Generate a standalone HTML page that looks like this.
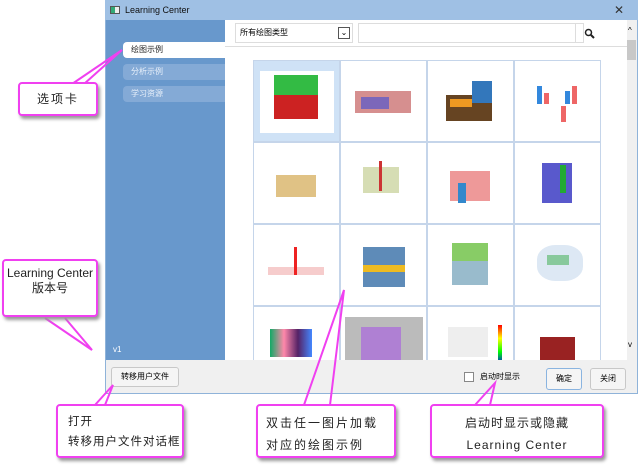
<!DOCTYPE html>
<html><head><meta charset="utf-8"><style>
*{margin:0;padding:0;box-sizing:border-box}
body{width:638px;height:470px;background:#fff;position:relative;overflow:hidden;font-family:"Liberation Sans","Noto Sans CJK SC",sans-serif}
.a{position:absolute}
.win{left:105px;top:0;width:533px;height:394px;border:1px solid #8fb3d9;background:#f0f0f0}
.title{left:105px;top:0;width:533px;height:20px;background:#9fc0e4;font-size:9px;color:#111;line-height:20px;padding-left:20px}
.left{left:106px;top:20px;width:119px;height:340px;background:#6898cc}
.tab{left:123px;width:102px;height:16px;font-size:8px;line-height:16px;padding-left:8px;border-radius:4px 0 0 4px}
.cell{width:87px;height:82px;border:1px solid #c5d5ea;background:#fff}
.co{border:2px solid #f040f0;background:#fff;box-shadow:2px 3px 3px #999;border-radius:4px;font-size:12px;color:#222}
.btn{border:1px solid #c8c8c8;border-radius:3px;background:#f5f5f5;font-size:8px;text-align:center}
</style></head><body>
<div class="a win"></div>
<div class="a title">Learning Center</div>
<div class="a" style="left:110px;top:6px;width:10px;height:8px;border:1px solid #555;background:#eee"><div style="width:4px;height:6px;background:#3a7"></div></div>
<div class="a" style="left:614px;top:3px;font-size:12px;color:#333">✕</div>
<div class="a left"></div>
<div class="a tab" style="top:42px;background:#fff;color:#222">绘图示例</div>
<div class="a tab" style="top:64px;background:#84aad6;color:#e8f0fa">分析示例</div>
<div class="a tab" style="top:86px;background:#84aad6;color:#e8f0fa">学习资源</div>
<div class="a" style="left:113px;top:345px;font-size:8px;color:#fff">v1</div>
<div class="a" style="left:225px;top:20px;width:402px;height:340px;background:#fff"></div>
<div class="a" style="left:225px;top:46px;width:402px;height:1px;background:#ddd"></div>
<div class="a" style="left:235px;top:23px;width:118px;height:20px;border:1px solid #ddd;font-size:8px;line-height:18px;padding-left:4px">所有绘图类型</div>
<div class="a" style="left:338px;top:27px;width:12px;height:12px;border:1px solid #555;font-size:8px;text-align:center;line-height:10px">⌄</div>
<div class="a" style="left:358px;top:23px;width:226px;height:20px;border:1px solid #ddd"></div>
<div class="a" style="left:575px;top:23px;width:1px;height:20px;background:#ddd"></div>
<svg class="a" style="left:584px;top:28px" width="12" height="12"><circle cx="4.5" cy="4.5" r="3" fill="none" stroke="#222" stroke-width="1.5"/><line x1="7" y1="7" x2="10" y2="10" stroke="#222" stroke-width="2"/></svg>
<div class="a" style="left:627px;top:20px;width:10px;height:340px;background:#f0f0f0"></div>
<div class="a" style="left:627px;top:40px;width:9px;height:20px;background:#c8c8c8"></div>
<div class="a" style="left:628px;top:26px;font-size:8px">^</div>
<div class="a" style="left:628px;top:340px;font-size:8px">v</div>
<div class="a" style="left:253px;top:60px;width:348px;height:300px;overflow:hidden">
<div class="a cell" style="left:0;top:0;background:#cfe2f6"><div class="a" style="left:6px;top:10px;width:74px;height:62px;background:#fff"></div><div class="a" style="left:20px;top:14px;width:44px;height:20px;background:#3b4"></div><div class="a" style="left:20px;top:34px;width:44px;height:24px;background:#c22"></div></div>
<div class="a cell" style="left:87px;top:0"><div class="a" style="left:14px;top:30px;width:56px;height:22px;background:#b44;opacity:.6"></div><div class="a" style="left:20px;top:36px;width:28px;height:12px;background:#55c;opacity:.7"></div></div>
<div class="a cell" style="left:174px;top:0"><div class="a" style="left:18px;top:34px;width:46px;height:26px;background:#642"></div><div class="a" style="left:44px;top:20px;width:20px;height:22px;background:#37b"></div><div class="a" style="left:22px;top:38px;width:22px;height:8px;background:#e92"></div></div>
<div class="a cell" style="left:261px;top:0"><div class="a" style="left:22px;top:25px;width:5px;height:18px;background:#38d"></div><div class="a" style="left:29px;top:32px;width:5px;height:11px;background:#e66"></div><div class="a" style="left:50px;top:30px;width:5px;height:13px;background:#38d"></div><div class="a" style="left:57px;top:25px;width:5px;height:18px;background:#e66"></div><div class="a" style="left:46px;top:45px;width:5px;height:16px;background:#e66"></div></div>
<div class="a cell" style="left:0;top:82px"><div class="a" style="left:22px;top:32px;width:40px;height:22px;background:#c93;opacity:.6"></div></div>
<div class="a cell" style="left:87px;top:82px"><div class="a" style="left:22px;top:24px;width:36px;height:26px;background:#9a4;opacity:.4"></div><div class="a" style="left:38px;top:18px;width:3px;height:30px;background:#c33"></div></div>
<div class="a cell" style="left:174px;top:82px"><div class="a" style="left:22px;top:28px;width:40px;height:30px;background:#d33;opacity:.5"></div><div class="a" style="left:30px;top:40px;width:8px;height:20px;background:#38c"></div></div>
<div class="a cell" style="left:261px;top:82px"><div class="a" style="left:27px;top:20px;width:30px;height:40px;background:#22b;opacity:.75"></div><div class="a" style="left:45px;top:22px;width:6px;height:28px;background:#2a3"></div></div>
<div class="a cell" style="left:0;top:164px"><div class="a" style="left:14px;top:42px;width:56px;height:8px;background:#e99;opacity:.5"></div><div class="a" style="left:40px;top:22px;width:3px;height:28px;background:#e22"></div></div>
<div class="a cell" style="left:87px;top:164px"><div class="a" style="left:22px;top:22px;width:42px;height:40px;background:#1a5a9a;opacity:.7"></div><div class="a" style="left:22px;top:40px;width:42px;height:7px;background:#eb2"></div></div>
<div class="a cell" style="left:174px;top:164px"><div class="a" style="left:24px;top:18px;width:36px;height:42px;background:#9bc"></div><div class="a" style="left:24px;top:18px;width:36px;height:18px;background:#8c6"></div></div>
<div class="a cell" style="left:261px;top:164px"><div class="a" style="left:22px;top:20px;width:46px;height:36px;background:#dde8f4;border-radius:40%"></div><div class="a" style="left:32px;top:30px;width:22px;height:10px;background:#3a4;opacity:.5"></div></div>
<div class="a cell" style="left:0;top:246px"><div class="a" style="left:16px;top:22px;width:42px;height:28px;background:linear-gradient(90deg,#1a6,#f8a,#526,#48f)"></div></div>
<div class="a cell" style="left:87px;top:246px"><div class="a" style="left:4px;top:10px;width:78px;height:60px;background:#bbb"></div><div class="a" style="left:20px;top:20px;width:40px;height:35px;background:#a6d;opacity:.7"></div></div>
<div class="a cell" style="left:174px;top:246px"><div class="a" style="left:20px;top:20px;width:40px;height:30px;background:#eee"></div><div class="a" style="left:70px;top:18px;width:4px;height:40px;background:linear-gradient(#f00,#ff0,#0f0,#00f)"></div></div>
<div class="a cell" style="left:261px;top:246px"><div class="a" style="left:25px;top:30px;width:35px;height:30px;background:#922"></div></div>
</div>
<div class="a btn" style="left:111px;top:367px;width:68px;height:20px;line-height:18px">转移用户文件</div>
<div class="a" style="left:464px;top:372px;width:10px;height:10px;border:1px solid #888;background:#fff"></div>
<div class="a" style="left:480px;top:371px;font-size:8px">启动时显示</div>
<div class="a btn" style="left:546px;top:368px;width:36px;height:22px;line-height:20px;border-color:#8ab4e0">确定</div>
<div class="a btn" style="left:590px;top:368px;width:36px;height:22px;line-height:20px">关闭</div>
<svg class="a" style="left:0;top:0" width="638" height="470"><g fill="none" stroke="#f040f0" stroke-width="2"><polyline points="72,84 122,50 84,84"/><polyline points="45,318 92,350 65,318"/><polyline points="95,405 113,385 105,405"/><polyline points="330,405 344,290 304,405"/><polyline points="475,405 495,383 490,405"/></g></svg>
<div class="a co" style="left:18px;top:82px;width:80px;height:34px;line-height:30px;text-align:center;letter-spacing:2px">选项卡</div>
<div class="a co" style="left:2px;top:259px;width:96px;height:58px;text-align:center;line-height:15px;padding-top:5px">Learning Center<br>版本号</div>
<div class="a co" style="left:56px;top:404px;width:128px;height:54px;padding:6px 0 0 10px;line-height:20px;letter-spacing:1px;font-size:11.5px;white-space:nowrap">打开<br>转移用户文件对话框</div>
<div class="a co" style="left:256px;top:404px;width:140px;height:54px;padding:6px 0 0 8px;line-height:22px;letter-spacing:2px">双击任一图片加载<br>对应的绘图示例</div>
<div class="a co" style="left:430px;top:404px;width:174px;height:54px;padding-top:6px;line-height:22px;text-align:center;letter-spacing:1px">启动时显示或隐藏<br>Learning Center</div>
</body></html>
